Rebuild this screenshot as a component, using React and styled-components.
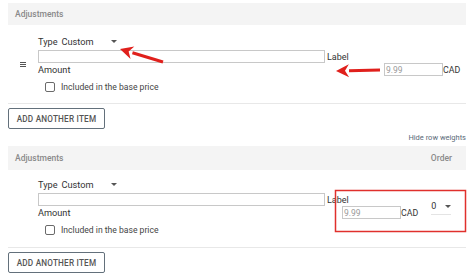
import React from 'react'
import styled, { createGlobalStyle } from 'styled-components'

const GlobalStyle = createGlobalStyle`
  html, body {
    margin: 0;
    padding: 0;
    background: #fff;
  }
  body {
    font-family: Roboto, "Liberation Sans", sans-serif;
    color: #333;
  }
`

const Page = styled.div`
  position: relative;
  width: 474px;
  height: 278px;
  padding: 3px 8px 0;
  box-sizing: border-box;
  overflow: hidden;
`

const SectionHeader = styled.div`
  height: ${p => p.$h}px;
  background: #f4f4f4;
  display: flex;
  align-items: center;
  justify-content: space-between;
  padding: 0 14px 0 7px;
  font-size: 8.5px;
  font-weight: 500;
  color: #8a8a8a;
`

const Row = styled.div`
  display: flex;
  padding: ${p => p.$top}px 0 ${p => p.$bottom}px;
  border-bottom: 1px solid #e8e8e8;
`

const Handle = styled.div`
  width: 30px;
  display: flex;
  align-items: center;
  justify-content: center;
  color: #555;
`

const Fields = styled.div`
  flex: 1;
  display: flex;
  flex-direction: column;
`

const TypeLine = styled.div`
  height: 14px;
  display: flex;
  align-items: center;
  font-size: 9.2px;
  color: #333;
`

const SelectBox = styled.div`
  margin-left: 4px;
  width: 57px;
  display: flex;
  align-items: center;
  justify-content: space-between;
`

const Caret = styled.span`
  width: 0;
  height: 0;
  border-left: 3px solid transparent;
  border-right: 3px solid transparent;
  border-top: 3px solid #555;
  margin-right: ${p => p.$mr || 0}px;
`

const InputLine = styled.div`
  margin-top: 2px;
  display: flex;
  align-items: center;
  gap: 2px;
  font-size: 9px;
  color: #333;
`

const TextInput = styled.div`
  width: ${p => p.$w}px;
  height: 11px;
  border: 1px solid #c8c8c8;
  box-sizing: content-box;
  font-size: 8.5px;
  color: #9a9a9a;
  display: flex;
  align-items: center;
  padding-left: 1px;
`

const AmountLine = styled.div`
  display: grid;
  grid-template-columns: ${p => p.$priceAt}px auto auto;
  justify-content: start;
  align-items: center;
  height: 13px;
  font-size: 9.2px;
  color: #333;
`

const PriceGroup = styled.div`
  display: flex;
  align-items: center;
  font-size: 8.8px;
`

const OrderSelect = styled.div`
  margin-left: 13px;
  align-self: start;
  margin-top: -7px;
  width: 20px;
  display: flex;
  align-items: center;
  justify-content: space-between;
  border-bottom: 1px solid #e4e4e4;
  padding-bottom: 1px;
  height: 14px;
  font-size: 9px;
`

const CheckLine = styled.div`
  margin-top: 4px;
  padding-left: 7px;
  height: 14px;
  display: flex;
  align-items: center;
  gap: 6px;
  font-size: 8.6px;
  color: #444;
`

const Checkbox = styled.span`
  width: 8px;
  height: 8px;
  border: 1.5px solid #6a6a6a;
  border-radius: 2px;
`

const AddButton = styled.div`
  margin-top: 4px;
  width: 97px;
  height: 21px;
  box-sizing: border-box;
  border: 1.5px solid #63707b;
  border-radius: 2px;
  display: flex;
  align-items: center;
  justify-content: center;
  font-size: 8.2px;
  font-weight: 500;
  letter-spacing: 0.2px;
  color: #555;
`

const HideLink = styled.div`
  margin: 2px 0 3px;
  height: 12px;
  display: flex;
  align-items: center;
  justify-content: flex-end;
  font-size: 7.5px;
  color: #5a6a78;
`

const Overlay = styled.svg`
  position: absolute;
  left: 0;
  top: 0;
  pointer-events: none;
`

const DragIcon = () => (
  <svg width="6" height="5" viewBox="0 0 6 5">
    <path d="M0 0.5h6M0 2.5h6M0 4.5h6" stroke="#555" strokeWidth="1" />
  </svg>
)

const Item = ({ top, bottom, handle, priceAt, order }) => (
  <Row $top={top} $bottom={bottom}>
    <Handle>{handle && <DragIcon />}</Handle>
    <Fields>
      <TypeLine>
        Type
        <SelectBox>Custom<Caret $mr={2} /></SelectBox>
      </TypeLine>
      <InputLine>
        <TextInput $w={284} />
        Label
      </InputLine>
      <AmountLine $priceAt={priceAt}>
        <span>Amount</span>
        <PriceGroup>
          <TextInput $w={56}>9.99</TextInput>
          CAD
        </PriceGroup>
        {order && (
          <OrderSelect>0<Caret /></OrderSelect>
        )}
      </AmountLine>
      <CheckLine>
        <Checkbox />
        Included in the base price
      </CheckLine>
    </Fields>
  </Row>
)

// red annotation arrow drawn over the screenshot
const Arrow = ({ x1, y1, x2, y2 }) => {
  const a = Math.atan2(y2 - y1, x2 - x1)
  const L = 13
  const W = 6.5
  const bx = x2 - L * Math.cos(a)
  const by = y2 - L * Math.sin(a)
  const px = -Math.sin(a) * W
  const py = Math.cos(a) * W
  return (
    <g>
      <line x1={x1} y1={y1} x2={bx} y2={by} stroke="#e0201c" strokeWidth="3" />
      <polygon
        points={`${x2},${y2} ${bx + px},${by + py} ${bx + 4 * Math.cos(a)},${by + 4 * Math.sin(a)} ${bx - px},${by - py}`}
        fill="#e0201c"
      />
    </g>
  )
}

export default function App() {
  return (
    <>
      <GlobalStyle />
      <Page>
        <SectionHeader $h={22}>Adjustments</SectionHeader>
        <Item top={9} bottom={9} handle priceAt={346} />
        <AddButton>ADD ANOTHER ITEM</AddButton>
        <HideLink>Hide row weights</HideLink>
        <SectionHeader $h={24}>
          <span>Adjustments</span>
          <span>Order</span>
        </SectionHeader>
        <Item top={7} bottom={10} priceAt={304} order />
        <AddButton>ADD ANOTHER ITEM</AddButton>
        <Overlay width="474" height="278">
          <Arrow x1={163} y1={62} x2={120} y2={49} />
          <Arrow x1={380} y1={70} x2={336} y2={71} />
          <rect x="335.5" y="190.5" width="130" height="41" fill="none" stroke="#e0302c" strokeWidth="1.5" />
        </Overlay>
      </Page>
    </>
  )
}
